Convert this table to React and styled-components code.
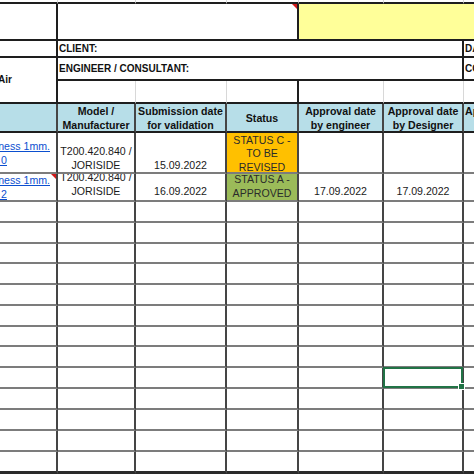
import React from 'react';
import styled, { createGlobalStyle } from 'styled-components';

const GlobalStyle = createGlobalStyle`
  html, body {
    margin: 0;
    padding: 0;
    background: #fff;
  }
  body {
    font-family: "Liberation Sans", Arial, sans-serif;
    overflow: hidden;
  }
`;

const edge = {
   dark: '2px solid #1e1e1e',
   line: '2px solid #7c7c7c',
   vline: '2px solid #454545',
   grid: '1px solid #d8d8d8',
   thick: '3px solid #2a2a2a',
   none: 'none',
};

const Sheet = styled.div`
   display: grid;
   width: 474px;
   height: 474px;
   grid-template-columns: 58px 78px 91px 72px 85px 80px 10px;
   grid-template-rows:
      4px 37px 17px 23px 23px 29px 41px 28px
      21px 21px 20px 21px 21px 21px 20px 21px 21px 21px 21px 21px 22px;
   font-family: 'Liberation Sans', Arial, sans-serif;
   font-size: 10.6px;
   color: #1a1a1a;
   overflow: hidden;
`;

const Cell = styled.div`
   position: relative;
   box-sizing: border-box;
   min-width: 0;
   overflow: hidden;
   display: flex;
   flex-direction: column;
   justify-content: ${({ $v }) =>
      $v === 'center' ? 'center' : $v === 'top' ? 'flex-start' : 'flex-end'};
   text-align: ${({ $h }) => $h || 'center'};
   white-space: nowrap;
   line-height: 13.8px;
   grid-column: span ${({ $span }) => $span || 1};
   grid-row: span ${({ $rows }) => $rows || 1};
   background: ${({ $bg }) => $bg || '#fff'};
   border-right: ${({ $r }) => edge[$r || 'vline']};
   border-bottom: ${({ $b }) => edge[$b || 'line']};
`;

const Label = styled(Cell)`
   justify-content: center;
   text-align: left;
   padding-left: 1px;
   font-size: 10px;
   font-weight: bold;
   color: #111;
`;

const HeadCell = styled(Cell)`
   justify-content: center;
   padding-top: 3px;
   padding-left: ${({ $h }) => ($h === 'left' ? '1px' : '0')};
   background: #b7dee8;
   font-weight: bold;
   color: #111;
   border-bottom: ${edge.dark};
`;

const StatusCell = styled(Cell)`
   background: ${({ $tone }) => ($tone === 'A' ? '#9bbb59' : '#ffc000')};
   color: #2b2b2b;
`;

const Lines = styled.div`
   margin-bottom: ${({ $drop }) => -($drop || 0)}px;
`;

const ClipLine = styled.div`
   display: flex;
   justify-content: flex-end;
   padding-right: ${({ $pad }) => $pad}px;
   line-height: 14px;
`;

const LinkText = styled.span`
   color: #0b4fcf;
   text-decoration: underline;
`;

const Comment = styled.span`
   position: absolute;
   top: 0;
   right: 0;
   width: 0;
   height: 0;
   border-top: 5px solid #d11a1a;
   border-left: 5px solid transparent;
`;

const SelectedCell = styled(Cell)`
   overflow: visible;
   z-index: 2;
`;

const Selection = styled.div`
   position: absolute;
   top: -1px;
   left: -1px;
   right: -1px;
   bottom: -1px;
   border: 2px solid #217346;
`;

const Handle = styled.span`
   position: absolute;
   right: -4px;
   bottom: -4px;
   width: 5px;
   height: 5px;
   background: #217346;
   border: 1px solid #fff;
`;

const submittals = [
   {
      link: ['Sheet thickness 1mm.', 'Rev. 0'],
      model: ['T200.420.840 /', 'JORISIDE'],
      submitted: '15.09.2022',
      tone: 'C',
      status: ['STATUS C -', 'TO BE', 'REVISED'],
      drop: 3,
      engineer: '',
      designer: '',
   },
   {
      link: ['Sheet thickness 1mm.', 'Rev. 2'],
      model: ['T200.420.840 /', 'JORISIDE'],
      submitted: '16.09.2022',
      tone: 'A',
      status: ['STATUS A -', 'APPROVED'],
      drop: 1,
      engineer: '17.09.2022',
      designer: '17.09.2022',
      comment: true,
   },
];

const blankRows = 13;
const selected = { row: 8, col: 5 };

const Text = ({ lines, drop }) => (
   <Lines $drop={drop}>
      {lines.map((l, i) => (
         <div key={i}>{l || '\u00a0'}</div>
      ))}
   </Lines>
);

export default function App() {
   return (
      <>
         <GlobalStyle />
         <Sheet>
            {/* strip above the form */}
            {[0, 1, 2, 3, 4, 5, 6].map((i) => (
               <Cell key={'s' + i} $r={i === 6 ? 'none' : 'grid'} $b="dark" />
            ))}

            {/* title row */}
            <Cell $r="dark" $b="dark" />
            <Cell $span={3} $r="dark" $b="dark">
               <Comment />
            </Cell>
            <Cell $span={3} $r="none" $b="dark" $bg="#ffff99" />

            {/* client row */}
            <Cell $r="dark" $b="dark" />
            <Label $span={5} $r="dark" $b="dark">CLIENT:</Label>
            <Label $r="none" $b="dark">DATE:</Label>

            {/* engineer row */}
            <Label $rows={2} $r="dark" $b="dark">
               <ClipLine $pad={44}>Fresh Air</ClipLine>
            </Label>
            <Label $span={5} $r="dark" $b="dark">ENGINEER / CONSULTANT:</Label>
            <Label $r="none" $b="dark">CONTRACT:</Label>

            {/* empty row */}
            <Cell $r="grid" $b="dark" />
            <Cell $r="grid" $b="dark" />
            <Cell $r="dark" $b="dark" />
            <Cell $r="grid" $b="dark" />
            <Cell $r="grid" $b="dark" />
            <Cell $r="none" $b="dark" />

            {/* header */}
            <HeadCell />
            <HeadCell>
               <Text lines={['Model /', 'Manufacturer']} />
            </HeadCell>
            <HeadCell>
               <Text lines={['Submission date', 'for validation']} />
            </HeadCell>
            <HeadCell>
               <Text lines={['Status']} />
            </HeadCell>
            <HeadCell>
               <Text lines={['Approval date', 'by engineer']} />
            </HeadCell>
            <HeadCell>
               <Text lines={['Approval date', 'by Designer']} />
            </HeadCell>
            <HeadCell $r="none" $h="left">
               <Text lines={['Approval date', '']} />
            </HeadCell>

            {/* submittals */}
            {submittals.map((s, i) => (
               <React.Fragment key={'d' + i}>
                  <Cell $v="center" $h="left">
                     <ClipLine $pad={6}>
                        <LinkText>{s.link[0]}</LinkText>
                     </ClipLine>
                     <ClipLine $pad={49}>
                        <LinkText>{s.link[1]}</LinkText>
                     </ClipLine>
                     {s.comment && <Comment />}
                  </Cell>
                  <Cell>
                     <Text lines={s.model} drop={s.drop - 2} />
                  </Cell>
                  <Cell>
                     <Text lines={[s.submitted]} drop={s.drop - 2} />
                  </Cell>
                  <StatusCell $tone={s.tone}>
                     <Text lines={s.status} drop={s.drop} />
                  </StatusCell>
                  <Cell>
                     <Text lines={[s.engineer]} drop={s.drop - 2} />
                  </Cell>
                  <Cell>
                     <Text lines={[s.designer]} drop={s.drop - 2} />
                  </Cell>
                  <Cell $r="none" />
               </React.Fragment>
            ))}

            {/* blank rows */}
            {Array.from({ length: blankRows }).map((_, r) =>
               [0, 1, 2, 3, 4, 5, 6].map((c) => {
                  const b = r === blankRows - 1 ? 'thick' : 'line';
                  const rr = c === 6 ? 'none' : 'vline';
                  if (r === selected.row && c === selected.col) {
                     return (
                        <SelectedCell key={r + '-' + c} $r={rr} $b={b}>
                           <Selection>
                              <Handle />
                           </Selection>
                        </SelectedCell>
                     );
                  }
                  return <Cell key={r + '-' + c} $r={rr} $b={b} />;
               })
            )}
         </Sheet>
      </>
   );
}
